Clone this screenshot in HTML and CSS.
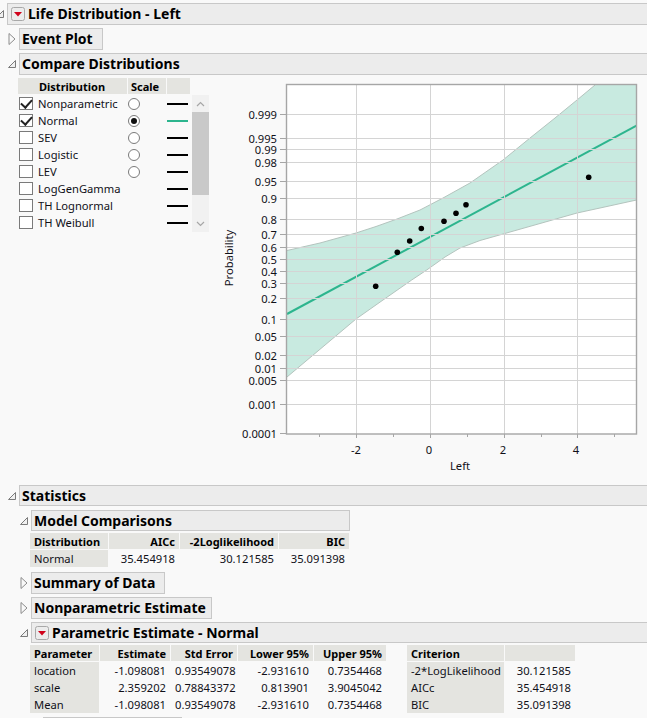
FILE: index.html
```html
<!DOCTYPE html>
<html lang="en">
<head>
<meta charset="utf-8">
<title>Life Distribution - Left</title>
<link rel="stylesheet" href="styles.css">
</head>
<body>
<svg class="defs" width="0" height="0" aria-hidden="true">
  <symbol id="open" viewBox="0 0 9 10"><path d="M1 8.5H8V1.5Z" fill="#f0f0f0" stroke="#7a7a7a"/></symbol>
  <symbol id="closed" viewBox="0 0 9 14"><path d="M1.5 1.5L7.5 7L1.5 12.5Z" fill="#f9f9f9" stroke="#8c8c8c"/></symbol>
  <symbol id="red" viewBox="0 0 14 14"><rect x=".5" y=".5" width="13" height="13" rx="2" fill="#ececec" stroke="#a8a8a8"/><path d="M3 5H11L7 9.5Z" fill="#d0021b"/></symbol>
</svg>

<div class="row title-row">
  <svg class="tri"><use href="#open"/></svg>
  <div class="bar grow"><svg class="redbtn"><use href="#red"/></svg><span>Life Distribution - Left</span></div>
</div>

<div class="lvl2">
  <div class="row event-row">
    <svg class="tri tri-c"><use href="#closed"/></svg>
    <div class="bar"><span>Event Plot</span></div>
  </div>
  <div class="row compare-row">
    <svg class="tri"><use href="#open"/></svg>
    <div class="bar grow"><span>Compare Distributions</span></div>
  </div>

  <div class="compare">
    <div class="panel">
      <div class="dist-head">
        <div class="hc center">Distribution</div>
        <div class="hc">Scale</div>
        <div class="hc"></div>
      </div>
      <div class="dist-body">
        <div class="dist-list">
          <div class="item"><span class="cb on"></span><span class="nm">Nonparametric</span><span class="rd"></span><span class="ln"></span></div>
          <div class="item"><span class="cb on"></span><span class="nm">Normal</span><span class="rd sel"></span><span class="ln green"></span></div>
          <div class="item"><span class="cb"></span><span class="nm">SEV</span><span class="rd"></span><span class="ln"></span></div>
          <div class="item"><span class="cb"></span><span class="nm">Logistic</span><span class="rd"></span><span class="ln"></span></div>
          <div class="item"><span class="cb"></span><span class="nm">LEV</span><span class="rd"></span><span class="ln"></span></div>
          <div class="item"><span class="cb"></span><span class="nm">LogGenGamma</span><span class="norad"></span><span class="ln"></span></div>
          <div class="item"><span class="cb"></span><span class="nm">TH Lognormal</span><span class="norad"></span><span class="ln"></span></div>
          <div class="item"><span class="cb"></span><span class="nm">TH Weibull</span><span class="norad"></span><span class="ln"></span></div>
        </div>
        <div class="scroll">
          <div class="chev"><svg width="9" height="6" viewBox="0 0 9 6"><path d="M1 5L4.5 1.5L8 5" fill="none" stroke="#a6a6a6" stroke-width="1.2"/></svg></div>
          <div class="thumb"></div>
          <div class="chev chev-d"><svg width="9" height="6" viewBox="0 0 9 6"><path d="M1 1L4.5 4.5L8 1" fill="none" stroke="#a6a6a6" stroke-width="1.2"/></svg></div>
        </div>
      </div>
    </div>

    <svg class="plot" width="427" height="400" viewBox="220 78 427 400" role="img" aria-label="Probability plot">
      <rect x="286.5" y="85" width="350" height="349" fill="#fff"/>
      <path class="band" d="M287 250.5L320 243L356 233L376 226.5L397 219L420 210L443 198L470 183L503 160L530 138L555 118L577 100L595 85H636.5V200L600 208L577 213L540 223.5L503 234L480 240.5L460 248L445 257L426.7 270L411.7 280L383 300L356 319L287 377Z"/>
      <path class="edge" d="M287 250.5L320 243L356 233L376 226.5L397 219L420 210L443 198L470 183L503 160L530 138L555 118L577 100L595 85"/>
      <path class="edge" d="M636.5 200L600 208L577 213L540 223.5L503 234L480 240.5L460 248L445 257L426.7 270L411.7 280L383 300L356 319L287 377"/>
      <line class="fit" x1="287" y1="314" x2="636.5" y2="125.7"/>
      <g class="grid">
        <path d="M356.5 85V434M430.5 85V434M504.5 85V434M577.5 85V434"/>
        <path d="M287 114.5H636M287 138.5H636M287 149.5H636M287 162.5H636M287 181.5H636M287 198.5H636M287 219.5H636M287 234.5H636M287 247.5H636M287 259.5H636M287 271.5H636M287 283.5H636M287 298.5H636M287 319.5H636M287 336.5H636M287 355.5H636M287 368.5H636M287 380.5H636M287 404.5H636"/>
      </g>
      <g class="pts">
        <circle cx="375.7" cy="286.3" r="2.8"/><circle cx="397.3" cy="252.3" r="2.8"/><circle cx="409.7" cy="241" r="2.8"/><circle cx="421.3" cy="228.5" r="2.8"/><circle cx="444" cy="221.3" r="2.8"/><circle cx="456" cy="213.3" r="2.8"/><circle cx="466" cy="204.7" r="2.8"/><circle cx="588.7" cy="177.3" r="2.8"/>
      </g>
      <rect class="frame" x="286.5" y="84.5" width="350" height="349.5"/>
      <path class="ticks" d="M280 114.5H286M280 138.5H286M280 149.5H286M280 162.5H286M280 181.5H286M280 198.5H286M280 219.5H286M280 234.5H286M280 247.5H286M280 259.5H286M280 271.5H286M280 283.5H286M280 298.5H286M280 319.5H286M280 336.5H286M280 355.5H286M280 368.5H286M280 380.5H286M280 404.5H286M280 433.5H286M356.5 434V438M430.5 434V438M504.5 434V438M577.5 434V438M319.5 434V437M393.5 434V437M467.5 434V437M541.5 434V437M614.5 434V437"/>
      <g class="lab end">
        <text x="277" y="118.5">0.999</text><text x="277" y="142.5">0.995</text><text x="277" y="153.5">0.99</text><text x="277" y="166.5">0.98</text><text x="277" y="185.5">0.95</text><text x="277" y="202.5">0.9</text><text x="277" y="223.5">0.8</text><text x="277" y="238.5">0.7</text><text x="277" y="251.5">0.6</text><text x="277" y="263.5">0.5</text><text x="277" y="275.5">0.4</text><text x="277" y="287.5">0.3</text><text x="277" y="302.5">0.2</text><text x="277" y="323.5">0.1</text><text x="277" y="340.5">0.05</text><text x="277" y="359.5">0.02</text><text x="277" y="372.5">0.01</text><text x="277" y="384.5">0.005</text><text x="277" y="408.5">0.001</text><text x="277" y="437.5">0.0001</text>
      </g>
      <g class="lab mid">
        <text x="356" y="454">-2</text><text x="429" y="454">0</text><text x="503" y="454">2</text><text x="576" y="454">4</text>
        <text x="460" y="470">Left</text>
      </g>
      <text class="axis-y" transform="translate(233 258) rotate(-90)">Probability</text>
    </svg>
  </div>

  <div class="row stats-row">
    <svg class="tri"><use href="#open"/></svg>
    <div class="bar grow"><span>Statistics</span></div>
  </div>

  <div class="lvl3">
    <div class="row model-row">
      <svg class="tri"><use href="#open"/></svg>
      <div class="bar model-bar"><span>Model Comparisons</span></div>
    </div>
    <div class="tbl model-tbl">
      <div class="hc l">Distribution</div><div class="hc">AICc</div><div class="hc">-2Loglikelihood</div><div class="hc">BIC</div>
      <div class="lc">Normal</div><div class="nc">35.454918</div><div class="nc">30.121585</div><div class="nc">35.091398</div>
    </div>

    <div class="row summary-row">
      <svg class="tri tri-c"><use href="#closed"/></svg>
      <div class="bar"><span>Summary of Data</span></div>
    </div>
    <div class="row nonpar-row">
      <svg class="tri tri-c"><use href="#closed"/></svg>
      <div class="bar"><span>Nonparametric Estimate</span></div>
    </div>
    <div class="row param-row">
      <svg class="tri"><use href="#open"/></svg>
      <div class="bar grow"><svg class="redbtn"><use href="#red"/></svg><span>Parametric Estimate - Normal</span></div>
    </div>
    <div class="tables">
      <div class="tbl param-tbl">
        <div class="hc l">Parameter</div><div class="hc">Estimate</div><div class="hc">Std Error</div><div class="hc">Lower 95%</div><div class="hc">Upper 95%</div>
        <div class="lc">location</div><div class="nc">-1.098081</div><div class="nc">0.93549078</div><div class="nc">-2.931610</div><div class="nc">0.7354468</div>
        <div class="lc">scale</div><div class="nc">2.359202</div><div class="nc">0.78843372</div><div class="nc">0.813901</div><div class="nc">3.9045042</div>
        <div class="lc">Mean</div><div class="nc">-1.098081</div><div class="nc">0.93549078</div><div class="nc">-2.931610</div><div class="nc">0.7354468</div>
      </div>
      <div class="tbl crit-tbl">
        <div class="hc l">Criterion</div><div class="hc"></div>
        <div class="lc">-2*LogLikelihood</div><div class="nc">30.121585</div>
        <div class="lc">AICc</div><div class="nc">35.454918</div>
        <div class="lc">BIC</div><div class="nc">35.091398</div>
      </div>
    </div>
    <div class="next-bar"></div>
  </div>
</div>
</body>
</html>
```

FILE: styles.css
```css
* { box-sizing: border-box; }
html, body { margin: 0; padding: 0; }
body {
  width: 647px;
  height: 718px;
  overflow: hidden;
  background: #f9f9f9;
  padding-top: 3px;
  font-family: "Noto Sans", "Open Sans", "Liberation Sans", sans-serif;
  font-size: 11.2px;
  color: #101018;
}
.defs { position: absolute; }

.row { display: flex; align-items: center; }
.tri { width: 12px; height: 10px; flex: none; padding-right: 2px; }
.tri-c { height: 14px; }

.bar {
  height: 22px;
  padding: 0 2px;
  display: flex;
  align-items: center;
  gap: 3px;
  background: #ececec;
  border: 1px solid #c8c8c8;
  font-size: 14px;
  font-weight: 700;
  color: #000;
  white-space: nowrap;
}
.bar span { margin-top: -1px; }
.grow { flex: 1; border-right: 0; }
.redbtn { width: 14px; height: 14px; flex: none; margin-left: 1px; }

.title-row { margin-left: -5px; }
.lvl2 { padding-left: 7px; }
.event-row { margin-top: 3px; }
.event-row .bar { width: 84px; }
.compare-row { margin-top: 3px; }

.compare { display: flex; margin-top: 3px; padding-left: 11px; }
.panel { width: 191px; margin-right: 11px; flex: none; }
.dist-head { display: grid; grid-template-columns: 109px 38px 23px; column-gap: 1px; width: 172px; }
.hc {
  height: 16px;
  line-height: 17px;
  background: #e4e4e0;
  font-size: 11px;
  font-weight: 700;
  color: #000;
  padding: 0 4px;
  text-align: right;
  white-space: nowrap;
}
.dist-head .hc { text-align: left; padding-left: 3px; }
.dist-head .center { padding-left: 21px; }
.dist-body { display: flex; margin-top: 1px; }
.dist-list { width: 174px; flex: none; }
.item { display: flex; align-items: center; height: 17px; }
.cb {
  width: 14px;
  height: 13px;
  margin-left: 1px;
  flex: none;
  position: relative;
  background: #fff;
  border: 1px solid #7a7a7a;
}
.cb.on::after {
  content: "";
  position: absolute;
  left: 1px;
  top: 1px;
  width: 9px;
  height: 5px;
  border-left: 2px solid #222;
  border-bottom: 2px solid #222;
  transform: rotate(-48deg);
}
.nm { width: 90px; margin-left: 5px; flex: none; white-space: nowrap; }
.rd, .norad { width: 12px; height: 12px; flex: none; }
.rd { border: 1px solid #7a7a7a; border-radius: 50%; background: #fff; position: relative; }
.rd.sel::after {
  content: "";
  position: absolute;
  left: 2px;
  top: 2px;
  width: 6px;
  height: 6px;
  border-radius: 50%;
  background: #111;
}
.ln { width: 21px; height: 2px; margin-left: 27px; background: #000; flex: none; }
.ln.green { background: #2db58e; }

.scroll { width: 17px; height: 137px; background: #f1f1f1; display: flex; flex-direction: column; }
.chev { height: 17px; display: flex; align-items: center; justify-content: center; flex: none; }
.thumb { height: 83px; background: #c9c9c9; flex: none; }
.chev-d { margin-top: auto; }

.plot { flex: none; display: block; }
.band { fill: #c8eae0; }
.edge { fill: none; stroke: #b4c4be; stroke-width: 1; stroke-linejoin: round; }
.fit { stroke: #2db58e; stroke-width: 2; }
.grid path { fill: none; stroke: #d4d4d4; stroke-width: 1; }
.pts circle { fill: #000; }
.frame { fill: none; stroke: #a6a6a6; stroke-width: 1.4; }
.ticks { fill: none; stroke: #a6a6a6; stroke-width: 1; }
.lab text, .axis-y { font-size: 11.2px; fill: #101018; }
.end text { text-anchor: end; }
.mid text { text-anchor: middle; }
.axis-y { text-anchor: middle; }

.stats-row { margin-top: 7px; }
.stats-row .bar { height: 21px; }
.lvl3 { padding-left: 12px; }
.model-row { margin-top: 4px; }
.model-bar { width: 319px; height: 21px; }

.tbl { display: grid; column-gap: 1px; }
.model-tbl { grid-template-columns: 78px 70px 98px 70px; margin: 2px 0 0 11px; grid-template-rows: 17px 17px; width: 319px; }
.tbl .l { text-align: left; }
.lc {
  height: 17px;
  line-height: 17px;
  background: #e4e4e0;
  padding: 0 4px;
  white-space: nowrap;
}
.nc {
  height: 17px;
  line-height: 17px;
  text-align: right;
  padding: 0 4px;
  white-space: nowrap;
}
.summary-row { margin-top: 5px; }
.summary-row .bar { width: 134px; }
.nonpar-row { margin-top: 3px; }
.nonpar-row .bar { width: 181px; }
.param-row { margin-top: 3px; }
.param-row .bar { height: 21px; }

.tables { display: flex; margin: 2px 0 0 11px; }
.param-tbl { grid-template-columns: 69px 70px 66px 75px 72px; grid-template-rows: 17px 17px 17px 17px; }
.crit-tbl { grid-template-columns: 97px 70px; grid-template-rows: 17px 17px 17px 17px; margin-left: 21px; }
.next-bar { width: 139px; height: 2px; margin-top: 4px; margin-left: 24px; border-top: 1px solid #c8c8c8; background: #ececec; }
```
